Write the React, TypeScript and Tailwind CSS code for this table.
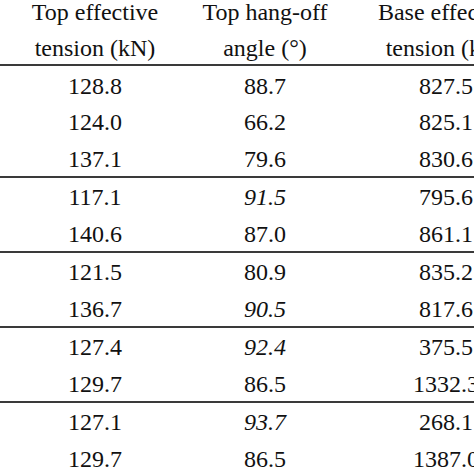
const sections: [string, [string, boolean], string][][] = [
  [
    ["128.8", ["88.7", false], "827.5"],
    ["124.0", ["66.2", false], "825.1"],
    ["137.1", ["79.6", false], "830.6"],
  ],
  [
    ["117.1", ["91.5", true], "795.6"],
    ["140.6", ["87.0", false], "861.1"],
  ],
  [
    ["121.5", ["80.9", false], "835.2"],
    ["136.7", ["90.5", true], "817.6"],
  ],
  [
    ["127.4", ["92.4", true], "375.5"],
    ["129.7", ["86.5", false], "1332.3"],
  ],
  [
    ["127.1", ["93.7", true], "268.1"],
    ["129.7", ["86.5", false], "1387.0"],
  ],
];

const cols = "grid grid-cols-[190px_150px_212px]";

export default function App() {
  return (
    <div
      className="w-[474px] h-[474px] overflow-hidden bg-white text-[#111] text-[24px]"
      style={{ fontFamily: '"Liberation Serif", "Times New Roman", serif' }}
    >
      <div className="w-[552px]">
        {/* Header */}
        <div className={`${cols} h-[64px] pt-[1px] leading-[22px] text-center`}>
          <div className="flex flex-col gap-[14px]">
            <div>Top effective</div>
            <div>tension (kN)</div>
          </div>
          <div className="flex flex-col gap-[14px]">
            <div>Top hang-off</div>
            <div>angle (°)</div>
          </div>
          <div className="flex flex-col gap-[14px]">
            <div>Base effective</div>
            <div>tension (kN)</div>
          </div>
        </div>

        {sections.map((rows, i) => (
          <div key={i} className="border-t-2 border-[#3a3a3a]">
            {rows.map(([a, [b, italic], c], j) => (
              <div key={j} className={`${cols} h-[36.5px] pt-[3px] items-center text-center leading-none`}>
                <div>{a}</div>
                <div className={italic ? "italic" : ""}>{b}</div>
                <div>{c}</div>
              </div>
            ))}
          </div>
        ))}
      </div>
    </div>
  );
}
